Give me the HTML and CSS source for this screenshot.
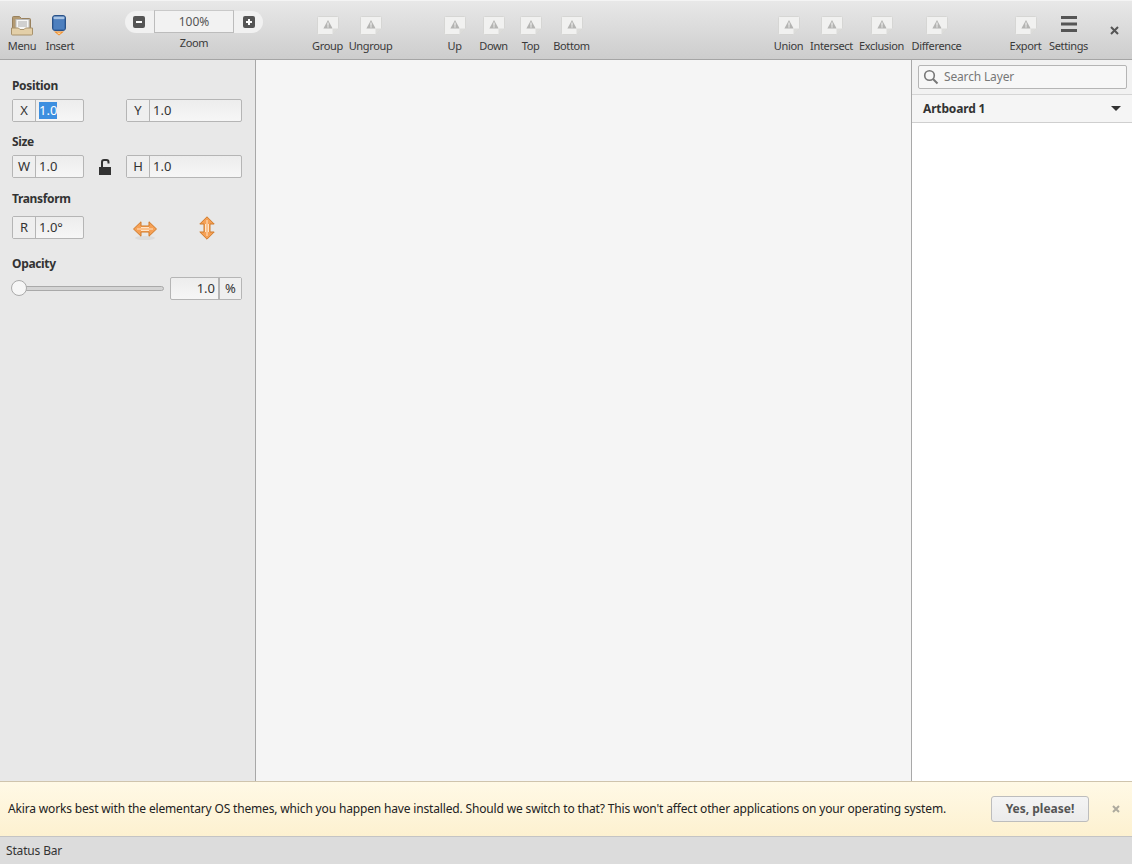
FILE: index.html
```html
<!DOCTYPE html>
<html lang="en">
<head>
    <meta charset="UTF-8">
    <meta name="viewport" content="width=device-width, initial-scale=1.0">
    <title>Akira</title>
    <link rel="stylesheet" href="styles.css">
</head>
<body>
    <svg class="defs" width="0" height="0">
        <symbol id="missing" viewBox="0 0 22 19">
            <path d="M.5 1.5a1 1 0 0 1 1-1h19a1 1 0 0 1 1 1v11l-6 6h-14a1 1 0 0 1-1-1z" fill="#f1f1f0" stroke="#d6d6d4"/>
            <path d="M15.5 18.5v-5a1 1 0 0 1 1-1h5z" fill="#dcdcda"/>
            <path d="M11 4l4.6 8.5h-9.2z" fill="#b4b4b2"/>
            <path d="M10.4 6.5h1.2v3.2h-1.2zM10.4 10.3h1.2v1.2h-1.2z" fill="#f1f1f0"/>
        </symbol>
    </svg>

    <div id="container">
        <div id="toolbar">
            <div class="group g-file">
                <div class="tool w-menu">
                    <svg class="ico" width="22" height="20" viewBox="0 0 22 20">
                        <path d="M1.5 16V2a1 1 0 0 1 1-1h6l2 2h8a1 1 0 0 1 1 1v12z" fill="#b39a72" stroke="#98815e"/>
                        <rect x="5" y="4" width="13" height="10" fill="#f7f7f5" stroke="#bbb"/>
                        <path d="M7 6.5h9M7 8.5h9M7 10.5h9" stroke="#a9a9a9"/>
                        <path d="M.5 12.5h7l1.5 1.5h4l1.5-1.5h7v6a1 1 0 0 1-1 1h-19a1 1 0 0 1-1-1z" fill="#e3cfa8" stroke="#a8926c"/>
                    </svg>
                    <span>Menu</span>
                </div>
                <div class="tool w-menu">
                    <svg class="ico" width="16" height="21" viewBox="0 0 16 21">
                        <rect x=".5" y=".5" width="13" height="15" rx="2.5" fill="#2f5f9e" stroke="#2a5288"/>
                        <rect x="1.5" y="1.5" width="11" height="3" rx="1" fill="#a9c4e4"/>
                        <rect x="1.5" y="4.5" width="11" height="10" fill="#4d7fbe"/>
                        <path d="M2 16.5h10l-5 4z" fill="#f08a24"/>
                        <path d="M4.5 17.5h5l-2.5 2z" fill="#fbd6a3"/>
                    </svg>
                    <span>Insert</span>
                </div>
            </div>

            <div class="zoom">
                <div class="zoom-row">
                    <div class="zoom-btn btn-left"><svg width="12" height="12" viewBox="0 0 12 12"><rect width="12" height="12" rx="2" fill="#555"/><path d="M3 5h6v2H3z" fill="#fff"/></svg></div>
                    <div class="zoom-value">100%</div>
                    <div class="zoom-btn btn-right"><svg width="12" height="12" viewBox="0 0 12 12"><rect width="12" height="12" rx="2" fill="#555"/><path d="M5 3h2v2h2v2H7v2H5V7H3V5h2z" fill="#fff"/></svg></div>
                </div>
                <span>Zoom</span>
            </div>

            <div class="group g-layer">
                <div class="tool w-42"><svg class="ico" width="22" height="19"><use href="#missing"/></svg><span>Group</span></div>
                <div class="tool w-44"><svg class="ico" width="22" height="19"><use href="#missing"/></svg><span>Ungroup</span></div>
            </div>

            <div class="group g-order">
                <div class="tool w-38"><svg class="ico" width="22" height="19"><use href="#missing"/></svg><span>Up</span></div>
                <div class="tool w-40"><svg class="ico" width="22" height="19"><use href="#missing"/></svg><span>Down</span></div>
                <div class="tool w-34"><svg class="ico" width="22" height="19"><use href="#missing"/></svg><span>Top</span></div>
                <div class="tool w-48"><svg class="ico" width="22" height="19"><use href="#missing"/></svg><span>Bottom</span></div>
            </div>

            <div class="group g-bool">
                <div class="tool w-36"><svg class="ico" width="22" height="19"><use href="#missing"/></svg><span>Union</span></div>
                <div class="tool w-50"><svg class="ico" width="22" height="19"><use href="#missing"/></svg><span>Intersect</span></div>
                <div class="tool w-50"><svg class="ico" width="22" height="19"><use href="#missing"/></svg><span>Exclusion</span></div>
                <div class="tool w-60"><svg class="ico" width="22" height="19"><use href="#missing"/></svg><span>Difference</span></div>
            </div>

            <div class="group g-export">
                <div class="tool w-40"><svg class="ico" width="22" height="19"><use href="#missing"/></svg><span>Export</span></div>
                <div class="tool w-46">
                    <svg class="ico" width="16" height="19" viewBox="0 0 16 19"><path d="M0 0h16v3H0zM0 6.5h16v3H0zM0 13h16v3H0z" fill="#555"/></svg>
                    <span>Settings</span>
                </div>
            </div>

            <svg class="close" width="9" height="9" viewBox="0 0 9 9"><path d="M1 1l7 7M8 1L1 8" stroke="#555" stroke-width="2"/></svg>
        </div>

        <div id="main">
            <div id="left">
                <h4 class="head">Position</h4>
                <div class="row">
                    <div class="field f-short"><b>X</b><div class="val"><span class="sel">1.0</span></div></div>
                    <div class="field f-long"><b>Y</b><div class="val">1.0</div></div>
                </div>

                <h4 class="head head-size">Size</h4>
                <div class="row">
                    <div class="field f-short"><b>W</b><div class="val">1.0</div></div>
                    <svg class="lock" width="12" height="16" viewBox="0 0 12 16">
                        <path d="M3 8V3.2Q3 1 5 1h2.5q2 0 2 2.2V4.5" fill="none" stroke="#333" stroke-width="2"/>
                        <rect y="8" width="12" height="8" fill="#333"/>
                    </svg>
                    <div class="field f-long"><b>H</b><div class="val">1.0</div></div>
                </div>

                <h4 class="head head-transform">Transform</h4>
                <div class="row">
                    <div class="field f-short"><b>R</b><div class="val">1.0°</div></div>
                    <svg class="flip-h" width="24" height="20" viewBox="0 0 24 20">
                        <ellipse cx="12" cy="17" rx="10" ry="2" fill="#dcdcdc"/>
                        <path d="M.5 8L8 .8V5h8V.8L23.5 8 16 15.2V11H8v4.2z" fill="#f5a055" stroke="#d07a2a" stroke-linejoin="round"/>
                        <path d="M4 8h16M8 6.5h8M8 9.5h8" stroke="#ffe3c6"/>
                    </svg>
                    <svg class="flip-v" width="16" height="24" viewBox="0 0 16 24">
                        <path d="M8 .8L15.2 8H11v8h4.2L8 23.2.8 16H5V8H.8z" fill="#f5a055" stroke="#d07a2a" stroke-linejoin="round"/>
                        <path d="M8 4v16M6.5 8v8M9.5 8v8" stroke="#ffe3c6"/>
                    </svg>
                </div>

                <h4 class="head head-opacity">Opacity</h4>
                <div class="row">
                    <div class="slider"><div class="knob"></div></div>
                    <div class="field f-pct"><div class="val val-r">1.0</div><b class="pct">%</b></div>
                </div>
            </div>

            <div id="canvas"></div>

            <div id="right">
                <div class="search-wrap">
                    <div class="search">
                        <svg width="16" height="16" viewBox="0 0 16 16"><circle cx="6.5" cy="6.5" r="4.8" fill="none" stroke="#777" stroke-width="1.6"/><path d="M10 10l4.5 4.5" stroke="#777" stroke-width="2"/></svg>
                        <span>Search Layer</span>
                    </div>
                </div>
                <div class="artboard">
                    <span>Artboard 1</span>
                    <svg width="10" height="5" viewBox="0 0 10 5"><path d="M0 0h10L5 5z" fill="#333"/></svg>
                </div>
            </div>
        </div>

        <div id="infobar">
            <p>Akira works best with the elementary OS themes, which you happen have installed. Should we switch to that? This won't affect other applications on your operating system.</p>
            <button class="yes">Yes, please!</button>
            <svg class="info-x" width="8" height="8" viewBox="0 0 8 8"><path d="M1 1l6 6M7 1L1 7" stroke="#aeaa9e" stroke-width="2"/></svg>
        </div>

        <div id="statusbar">Status Bar</div>
    </div>
</body>
</html>
```

FILE: styles.css
```css
* { box-sizing: border-box; }
html, body { margin: 0; height: 100%; }
body { font-family: "Noto Sans", sans-serif; font-size: 12px; letter-spacing: -0.16px; color: #333; }
.defs { display: block; height: 0; }

#container { width: 1132px; height: 864px; display: flex; flex-direction: column; overflow: hidden; }

/* toolbar */
#toolbar {
    height: 60px; flex: none;
    display: flex; align-items: flex-start;
    background: linear-gradient(#e8e8e8, #cdcdcd);
    border-top: 1px solid #f4f4f4;
    border-bottom: 1px solid #a5a5a5;
    font-size: 11px; letter-spacing: -0.35px; color: #3a3a3a;
}
.group { display: flex; }
.g-file { margin-left: 3px; }
.g-layer { margin-left: 43px; }
.g-order { margin-left: 43px; }
.g-bool { margin-left: 175px; }
.g-export { margin-left: 39px; }
.g-layer .tool, .g-order .tool, .g-bool .tool, .g-export .tool { padding-left: 1px; }

.tool { display: flex; flex-direction: column; align-items: center; white-space: nowrap; padding-top: 14px; }
.tool .ico { height: 21px; flex: none; }
.tool span { margin-top: 2px; line-height: 16px; }
.w-menu { width: 38px; }
.w-34 { width: 34px; } .w-36 { width: 36px; } .w-38 { width: 38px; } .w-40 { width: 40px; }
.w-42 { width: 42px; } .w-44 { width: 44px; } .w-46 { width: 46px; } .w-48 { width: 48px; }
.w-50 { width: 50px; } .w-60 { width: 60px; }

.zoom { width: 138px; margin-left: 46px; padding-top: 9px; display: flex; flex-direction: column; align-items: center; }
.zoom span { margin-top: 2px; line-height: 15px; }
.zoom-row { display: flex; width: 100%; height: 23px; align-items: center; }
.zoom-btn { width: 29px; height: 22px; background: #f1f1f1; display: flex; align-items: center; justify-content: center; }
.btn-left { border-radius: 11px 0 0 11px; padding-right: 1px; }
.btn-right { border-radius: 0 11px 11px 0; }
.zoom-value {
    width: 80px; height: 23px; text-align: center; line-height: 21px; font-size: 12px; letter-spacing: 0; color: #555;
    background: #f2f2f2; border: 1px solid #bcbcbc; border-top-color: #c9c9c9;
}
.close { margin: 25px 0 0 19px; }

/* main area */
#main { flex: 1; display: flex; min-height: 0; }
#left { width: 256px; flex: none; padding: 19px 13px 0 12px; background: #e8e8e8; border-right: 1px solid #a8a8a8; }
#canvas { flex: 1; background: #f5f5f5; }
#right { width: 221px; flex: none; background: #fff; border-left: 1px solid #a8a8a8; }

.head { margin: 0 0 6px; height: 14px; line-height: 14px; font-size: 12px; font-weight: 700; letter-spacing: -0.35px; color: #333; }
.head-size { margin-top: 13px; }
.head-transform { margin-top: 14px; margin-bottom: 10px; }
.head-opacity { margin-top: 18px; }

.row { display: flex; align-items: center; height: 23px; position: relative; }
.field { height: 23px; display: flex; border: 1px solid #b5b5b5; border-radius: 2px; font-size: 13px; letter-spacing: 0; background: linear-gradient(#ededed, #f6f6f6); }
.field b { width: 23px; flex: none; text-align: center; line-height: 21px; font-weight: 400; color: #333; border-right: 1px solid #b5b5b5; background: #efefef; }
.f-short { width: 72px; }
.f-long { width: 116px; margin-left: auto; }
.f-pct { width: 72px; margin-left: auto; }
.val { flex: 1; line-height: 21px; padding-left: 3px; color: #333; }
.val-r { text-align: right; padding: 0 3px 0 0; }
.field .pct { border-right: none; border-left: 2px solid #b5b5b5; width: 23px; }
.sel { display: inline-block; height: 17px; line-height: 17px; margin-top: 2px; vertical-align: top; background: #3d8fe0; color: #fff; }

.lock { margin-left: 15px; }
.flip-h { margin-left: 49px; margin-top: 7px; }
.flip-v { margin-left: 42px; margin-top: 1px; }

.slider { width: 152px; height: 5px; border: 1px solid #a9a9a9; border-radius: 3px; background: #d4d4d4; position: relative; }
.knob { position: absolute; left: -2px; top: -7px; width: 16px; height: 16px; border-radius: 50%; background: #f6f6f6; border: 1px solid #aaa; }

.search-wrap { height: 35px; padding: 5px 5px 0 6px; background: #f2f2f2; border-bottom: 1px solid #d5d5d5; }
.search { height: 24px; display: flex; align-items: center; gap: 5px; padding: 0 0 2px 4px; background: #f7f7f7; border: 1px solid #b5b5b5; border-radius: 2px; color: #777; }
.search svg { margin-top: 2px; }
.artboard { height: 28px; display: flex; align-items: center; justify-content: space-between; padding: 0 11px 0 11px; background: #f5f5f5; border-bottom: 1px solid #cfcfcf; font-weight: 700; color: #333; }

/* bottom */
#infobar {
    height: 56px; flex: none;
    display: flex; align-items: center; padding: 0 0 1px 8px;
    background: linear-gradient(#fff9e6, #fdf1d0);
    border-top: 1px solid #cfc4ad;
    border-bottom: 1px solid #c4c4c4;
    color: #222;
}
#infobar p { margin: 0; white-space: nowrap; }
.yes {
    width: 98px; height: 26px; padding: 0; margin-left: auto;
    font: 700 12px "Noto Sans", sans-serif; color: #555;
    background: linear-gradient(#f4f4f4, #ebebeb);
    border: 1px solid #bdbdbd; border-radius: 3px;
}
.info-x { margin: 0 12px 0 23px; }
#statusbar { height: 27px; flex: none; padding-left: 6px; line-height: 27px; background: #dcdcdc; color: #333; }
```
